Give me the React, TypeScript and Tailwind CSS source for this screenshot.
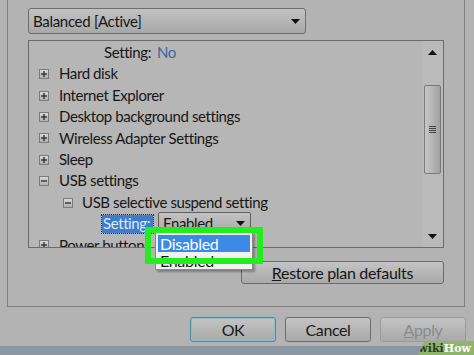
const FONT = { fontFamily: 'Lato, "Noto Sans", sans-serif' };

const TREE = [
  { label: "Hard disk", open: false },
  { label: "Internet Explorer", open: false },
  { label: "Desktop background settings", open: false },
  { label: "Wireless Adapter Settings", open: false },
  { label: "Sleep", open: false },
  { label: "USB settings", open: true },
] as const;

function ExpandBox({ open }: { open: boolean }) {
  return (
    <span className="flex h-[10px] w-[10px] shrink-0 items-center justify-center border border-[#7c7c7c] bg-gradient-to-b from-[#d8d8d8] to-[#b0b0b0]">
      <svg width="6" height="6" viewBox="0 0 6 6">
        <path d="M0 3h6" stroke="#333" strokeWidth="1.4" />
        {!open && <path d="M3 0v6" stroke="#333" strokeWidth="1.4" />}
      </svg>
    </span>
  );
}

function Arrow({ down = true }: { down?: boolean }) {
  return (
    <svg width="9" height="5" viewBox="0 0 9 5">
      <path d={down ? "M0 0h9L4.5 5z" : "M0 5h9L4.5 0z"} fill="#111" />
    </svg>
  );
}

function Button({ label, kind }: { label: React.ReactNode; kind?: "ok" | "off" }) {
  const border =
    kind === "ok"
      ? "border-[#4a8aa0] shadow-[inset_0_0_0_1px_#8fc0d0]"
      : kind === "off"
        ? "border-[#9a9a9a] text-[#8a8a8a]"
        : "border-[#6b6b6b]";
  return (
    <div
      className={`flex h-[25px] w-[86px] items-center justify-center rounded-[3px] border bg-gradient-to-b from-[#c4c4c4] to-[#a9a9a9] text-[16px] tracking-[-0.4px] text-[#1a1a1a] ${border}`}
    >
      {label}
    </div>
  );
}

export default function App() {
  return (
    <div
      className="relative flex h-[355px] w-[474px] flex-col overflow-hidden bg-[#b3b3b3] text-[#161616]"
      style={FONT}
    >
      {/* group frame */}
      <div className="ml-[7px] h-[307px] w-[458px] border-b border-l border-r border-[#7e7e7e] pl-[20px] pt-[8px]">
        <div className="flex h-[26px] w-[278px] items-center justify-between rounded-[3px] border border-[#6e6e6e] bg-gradient-to-b from-[#c2c2c2] to-[#a8a8a8] pl-[4px] pr-[5px] text-[15px] tracking-[-0.3px]">
          <span>Balanced [Active]</span>
          <Arrow />
        </div>

        <div className="mt-[6px] flex h-[208px] w-[416px] border border-[#6c6c6c] bg-[#b6b6b6]">
          <div className="flex-1 overflow-hidden pt-[1px] text-[15px] leading-[21.4px] tracking-[-0.4px]">
            <div className="flex pl-[75px]">
              <span>Setting:</span>
              <span className="ml-[6px] text-[#3b669a]">No</span>
            </div>
            {TREE.map((t) => (
              <div key={t.label} className="flex items-center gap-[10px] pl-[10px]">
                <ExpandBox open={t.open} />
                <span>{t.label}</span>
              </div>
            ))}
            <div className="flex items-center gap-[9px] pl-[34px]">
              <ExpandBox open />
              <span>USB selective suspend setting</span>
            </div>
            <div className="flex h-[21.4px] items-center pl-[73px]">
              <span className="flex h-[18px] w-[51px] shrink-0 items-center whitespace-nowrap bg-[#3f7ccc] pl-[1px] text-[#dce9f8] outline outline-1 outline-dotted outline-[#222]">
                Setting:
              </span>
              <div className="ml-[5px] flex h-[23px] w-[93px] items-center justify-between rounded-[2px] border border-[#5e5e5e] bg-gradient-to-b from-[#c2c2c2] to-[#a8a8a8] pl-[4px] pr-[5px]">
                <span>Enabled</span>
                <Arrow />
              </div>
            </div>
            <div className="flex items-center gap-[10px] pl-[10px]">
              <ExpandBox open={false} />
              <span>Power buttons and lid</span>
            </div>
          </div>

          {/* scrollbar */}
          <div className="flex w-[21px] flex-col items-center bg-[#bababa]">
            <div className="flex h-[22px] items-center">
              <Arrow down={false} />
            </div>
            <div className="mt-[22px] flex h-[89px] w-[17px] items-center justify-center rounded-[2px] border border-[#7a7a7a] bg-gradient-to-r from-[#c6c6c6] via-[#b4b4b4] to-[#a0a0a0]">
              <svg width="7" height="7" viewBox="0 0 7 7">
                <path d="M0 .5h7M0 2.5h7M0 4.5h7M0 6.5h7" stroke="#444" strokeWidth="1" />
              </svg>
            </div>
            <div className="flex-1" />
            <div className="flex h-[22px] items-center">
              <Arrow />
            </div>
          </div>
        </div>

        <div className="ml-[213px] mt-[13px] flex h-[23px] w-[203px] items-center justify-center rounded-[3px] border border-[#6b6b6b] bg-gradient-to-b from-[#c4c4c4] to-[#a9a9a9] text-[16px] tracking-[-0.3px]">
          <span>
            <span className="underline">R</span>estore plan defaults
          </span>
        </div>
      </div>

      {/* dialog buttons */}
      <div className="mt-[10px] flex justify-end gap-[9px] pr-[8px]">
        <Button label="OK" kind="ok" />
        <Button label="Cancel" />
        <Button
          label={
            <span>
              <span className="underline">A</span>pply
            </span>
          }
          kind="off"
        />
      </div>
      <div className="mt-auto h-[9px] bg-[#8b97a3]" />

      {/* open dropdown list */}
      <div className="absolute left-[155px] top-[232px] flex h-[38px] w-[98px] flex-col border border-[#8a8a8a] bg-[#f2f2f2] p-[2px] text-[16px] leading-[17px] tracking-[-0.3px] shadow-[2px_2px_2px_rgba(0,0,0,0.3)]">
        <div className="bg-[#3d8ae6] pl-[2px] text-white">Disabled</div>
        <div className="pl-[2px]">Enabled</div>
      </div>
      {/* highlight */}
      <div className="absolute left-[145px] top-[227px] h-[37px] w-[118px] border-[6px] border-[#22ee1e]" />

      {/* badge */}
      <div
        className="absolute bottom-0 right-0 flex h-[14px] w-[56px] items-center justify-end bg-[#8fb46c] pr-[3px] text-[11px] font-bold leading-none [clip-path:polygon(12%_0,100%_0,100%_100%,0_100%)]"
        style={{ fontFamily: '"DejaVu Serif", serif' }}
      >
        <span className="text-[#2e3b22]">wiki</span>
        <span className="text-white">How</span>
      </div>
    </div>
  );
}
